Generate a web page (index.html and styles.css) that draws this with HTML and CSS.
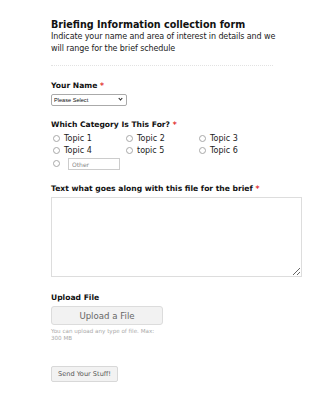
FILE: index.html
```html
<!DOCTYPE html>
<html lang="en">
<head>
    <meta charset="UTF-8">
    <meta name="viewport" content="width=device-width, initial-scale=1.0">
    <title>Briefing Information collection form</title>
    <link rel="stylesheet" href="styles.css">
</head>
<body>
    <form class="form">
        <!-- Заголовок -->
        <div class="form-header">
            <h1>Briefing Information collection form</h1>
            <p>Indicate your name and area of interest in details and we will range for the brief schedule</p>
        </div>

        <div class="field">
            <label class="label">Your Name <span class="req">*</span></label>
            <div class="select-wrap">
                <select class="select">
                    <option>Please Select</option>
                </select>
            </div>
        </div>

        <div class="field">
            <label class="label">Which Category Is This For? <span class="req">*</span></label>
            <div class="radios">
                <label class="radio"><input type="radio" name="cat"> Topic 1</label>
                <label class="radio"><input type="radio" name="cat"> Topic 2</label>
                <label class="radio"><input type="radio" name="cat"> Topic 3</label>
                <label class="radio"><input type="radio" name="cat"> Topic 4</label>
                <label class="radio"><input type="radio" name="cat"> topic 5</label>
                <label class="radio"><input type="radio" name="cat"> Topic 6</label>
                <label class="radio other"><input type="radio" name="cat"> <input type="text" class="other-input" placeholder="Other"></label>
            </div>
        </div>

        <div class="field field-text">
            <label class="label">Text what goes along with this file for the brief <span class="req">*</span></label>
            <textarea class="textarea"></textarea>
        </div>

        <div class="field">
            <label class="label">Upload File</label>
            <button type="button" class="upload-btn">Upload a File</button>
            <div class="hint">You can upload any type of file. Max:<br>300 MB</div>
        </div>

        <button type="button" class="submit-btn">Send Your Stuff!</button>
    </form>
</body>
</html>
```

FILE: styles.css
```css
body {
    margin: 0;
    font-family: "DejaVu Sans", Verdana, sans-serif;
    color: #111;
    background: white;
}

.form {
    width: 222px;
    padding: 19px 0 0 51px;
}

/* Заголовок */
.form-header {
    padding-bottom: 10px;
    border-bottom: 1px dotted #e2e2e2;
    margin-bottom: 15px;
}

.form-header h1 {
    margin: 0;
    font-size: 9.6px;
    font-weight: bold;
    line-height: 12px;
}

.form-header p {
    margin: 0 -10px 0 0;
    font-size: 8px;
    letter-spacing: -0.1px;
    line-height: 12px;
    color: #222;
}

.field {
    margin-bottom: 14px;
}

.field-text {
    margin-bottom: 16px;
}

.label {
    display: block;
    font-size: 7.6px;
    font-weight: bold;
    line-height: 10px;
    margin-bottom: 3px;
    white-space: nowrap;
}

.req {
    color: #e02020;
}

/* Выпадающий список */
.select-wrap {
    position: relative;
    width: 76px;
}

.select-wrap::after {
    content: "";
    position: absolute;
    right: 5px;
    top: 3px;
    width: 2px;
    height: 2px;
    border-right: 1.2px solid #222;
    border-bottom: 1.2px solid #222;
    transform: rotate(45deg);
}

.select {
    display: block;
    width: 76px;
    height: 12px;
    font-size: 5.6px;
    font-family: "Liberation Sans", Arial, sans-serif;
    padding: 0 2px;
    border: 1px solid #aaa;
    border-radius: 2px;
    background: white;
    color: #111;
    appearance: none;
    -webkit-appearance: none;
}

/* Радио */
.radios {
    display: grid;
    grid-template-columns: 73px 73px 73px;
    row-gap: 1px;
}

.radio {
    display: flex;
    align-items: center;
    gap: 4px;
    font-size: 8px;
    line-height: 11px;
    color: #222;
}

.radio input[type="radio"] {
    appearance: none;
    -webkit-appearance: none;
    width: 7px;
    height: 7px;
    margin: 0 0 0 2px;
    border: 1px solid #a8a8a8;
    border-radius: 50%;
    background: white;
    box-sizing: border-box;
}

.other-input {
    width: 44px;
    height: 10px;
    margin: 1px 0 0 4px;
    padding: 0 3px;
    border: 1px solid #ccc;
    font-size: 6px;
    font-family: "DejaVu Sans", Verdana, sans-serif;
}

.other-input::placeholder {
    color: #888;
}

.textarea {
    display: block;
    width: 251px;
    height: 80px;
    box-sizing: border-box;
    border: 1px solid #ddd;
    border-radius: 0;
    resize: vertical;
}

.upload-btn {
    display: block;
    width: 112px;
    height: 19px;
    font-family: "DejaVu Sans", Verdana, sans-serif;
    font-size: 8.6px;
    color: #666;
    background: #f2f2f2;
    border: 1px solid #dcdcdc;
    border-radius: 3px;
    margin-top: 3px;
}

.hint {
    font-size: 5.6px;
    line-height: 7px;
    color: #aaa;
    margin-top: 3px;
}

.submit-btn {
    display: block;
    margin-top: 24px;
    height: 16px;
    padding: 0 6px;
    font-family: "DejaVu Sans", Verdana, sans-serif;
    font-size: 6.6px;
    color: #555;
    background: #f2f2f2;
    border: 1px solid #d8d8d8;
    border-radius: 2px;
}
```
